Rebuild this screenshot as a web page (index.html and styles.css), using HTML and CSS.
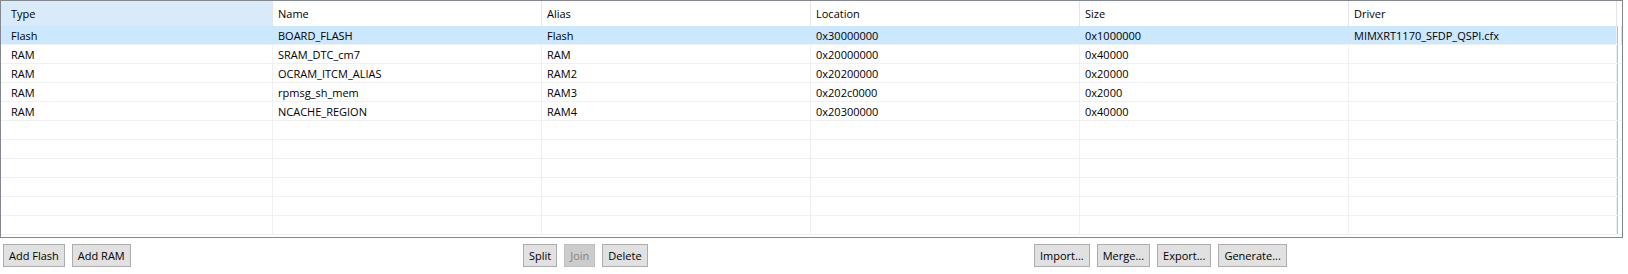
FILE: index.html
```html
<!DOCTYPE html>
<html lang="en">
  <head>
    <meta charset="UTF-8" />
    <title>Memory Configuration</title>
    <link rel="stylesheet" href="styles.css">
  </head>
  <body>
    <div class="mem-table">
      <div class="row header">
        <div class="cell hot">Type</div>
        <div class="cell">Name</div>
        <div class="cell">Alias</div>
        <div class="cell">Location</div>
        <div class="cell">Size</div>
        <div class="cell">Driver</div>
        <div class="filler"></div>
      </div>
      <div class="row selected">
        <div class="cell">Flash</div>
        <div class="cell">BOARD_FLASH</div>
        <div class="cell">Flash</div>
        <div class="cell">0x30000000</div>
        <div class="cell">0x1000000</div>
        <div class="cell">MIMXRT1170_SFDP_QSPI.cfx</div>
        <div class="filler"></div>
      </div>
      <div class="row">
        <div class="cell">RAM</div>
        <div class="cell">SRAM_DTC_cm7</div>
        <div class="cell">RAM</div>
        <div class="cell">0x20000000</div>
        <div class="cell">0x40000</div>
        <div class="cell"></div>
        <div class="filler"></div>
      </div>
      <div class="row">
        <div class="cell">RAM</div>
        <div class="cell">OCRAM_ITCM_ALIAS</div>
        <div class="cell">RAM2</div>
        <div class="cell">0x20200000</div>
        <div class="cell">0x20000</div>
        <div class="cell"></div>
        <div class="filler"></div>
      </div>
      <div class="row">
        <div class="cell">RAM</div>
        <div class="cell">rpmsg_sh_mem</div>
        <div class="cell">RAM3</div>
        <div class="cell">0x202c0000</div>
        <div class="cell">0x2000</div>
        <div class="cell"></div>
        <div class="filler"></div>
      </div>
      <div class="row">
        <div class="cell">RAM</div>
        <div class="cell">NCACHE_REGION</div>
        <div class="cell">RAM4</div>
        <div class="cell">0x20300000</div>
        <div class="cell">0x40000</div>
        <div class="cell"></div>
        <div class="filler"></div>
      </div>
      <!-- empty rows to fill the list -->
      <div class="row"><div class="cell"></div><div class="cell"></div><div class="cell"></div><div class="cell"></div><div class="cell"></div><div class="cell"></div><div class="filler"></div></div>
      <div class="row"><div class="cell"></div><div class="cell"></div><div class="cell"></div><div class="cell"></div><div class="cell"></div><div class="cell"></div><div class="filler"></div></div>
      <div class="row"><div class="cell"></div><div class="cell"></div><div class="cell"></div><div class="cell"></div><div class="cell"></div><div class="cell"></div><div class="filler"></div></div>
      <div class="row"><div class="cell"></div><div class="cell"></div><div class="cell"></div><div class="cell"></div><div class="cell"></div><div class="cell"></div><div class="filler"></div></div>
      <div class="row"><div class="cell"></div><div class="cell"></div><div class="cell"></div><div class="cell"></div><div class="cell"></div><div class="cell"></div><div class="filler"></div></div>
      <div class="row"><div class="cell"></div><div class="cell"></div><div class="cell"></div><div class="cell"></div><div class="cell"></div><div class="cell"></div><div class="filler"></div></div>
    </div>

    <div class="button-bar">
      <div class="group">
        <button>Add Flash</button>
        <button>Add RAM</button>
      </div>
      <div class="group">
        <button>Split</button>
        <button disabled>Join</button>
        <button>Delete</button>
      </div>
      <div class="group">
        <button>Import...</button>
        <button>Merge...</button>
        <button>Export...</button>
        <button>Generate...</button>
      </div>
    </div>
  </body>
</html>
```

FILE: styles.css
```css
body {
  margin: 0;
  background: #fff;
  font-family: "Open Sans", "Noto Sans", sans-serif;
  font-size: 11px;
  color: #000;
}

.mem-table {
  width: 1621px;
  height: 236px;
  border: 1px solid #828790;
  overflow: hidden;
}

.row {
  display: grid;
  grid-template-columns: 271px 269px 269px 269px 269px 268px 5px;
  height: 18px;
  border-bottom: 1px solid #f0f0f0;
}
.row.header {
  height: 25px;
  border-bottom: none;
}

.cell {
  display: flex;
  align-items: center;
  padding-left: 5px;
  border-left: 1px solid #f0f0f0;
  white-space: nowrap;
  overflow: hidden;
}
.cell:first-child {
  padding-left: 10px;
  border-left: none;
}
.header .cell {
  border-left-color: #e5e5e5;
}
.header .cell.hot {
  background: #d9ebf9;
}

.filler {
  border-left: 1px solid #e5e5e5;
}
.row:not(.header) .filler {
  border-left: 1px solid #e8f0f8;
  box-shadow: inset -3px 0 0 #fff, inset -4px 0 0 #99c9ef;
}

.row.selected {
  background: #cce8ff;
}
.row.selected .cell {
  border-left-color: #cce8ff;
}

.button-bar {
  display: grid;
  grid-template-columns: 520px 511px auto;
  margin-top: 6px;
  padding-left: 3px;
}
.group {
  display: flex;
  gap: 7px;
}

button {
  height: 23px;
  padding: 0 5px;
  font-family: inherit;
  font-size: 11px;
  color: #000;
  background: #e1e1e1;
  border: 1px solid #adadad;
  border-radius: 0;
}
button:disabled {
  color: #838383;
  background: #cccccc;
  border-color: #bfbfbf;
}
```
